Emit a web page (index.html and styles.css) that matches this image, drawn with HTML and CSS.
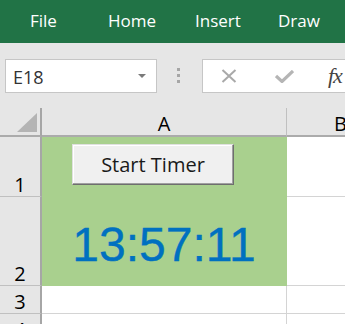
FILE: index.html
```html
<!DOCTYPE html>
<html lang="en">
<head>
<meta charset="utf-8">
<title>Timer</title>
<link rel="stylesheet" href="styles.css">
</head>
<body>
<div class="app">
  <nav class="ribbon">
    <span class="tab tab-file">File</span>
    <span class="tab tab-home">Home</span>
    <span class="tab tab-insert">Insert</span>
    <span class="tab tab-draw">Draw</span>
  </nav>
  <div class="formula-bar">
    <div class="name-box">
      <span class="name">E18</span>
      <svg class="caret" width="8" height="4" viewBox="0 0 8 4"><polygon points="0,0 8,0 4,4" fill="#7a7a7a"/></svg>
    </div>
    <div class="grip"><i></i><i></i><i></i></div>
    <div class="formula-box">
      <svg class="icon-x" width="16" height="14" viewBox="0 0 16 14"><path d="M1.5 1 L14.5 13 M14.5 1 L1.5 13" stroke="#a9a9a9" stroke-width="2" fill="none"/></svg>
      <svg class="icon-check" width="19" height="13" viewBox="0 0 19 13"><path d="M1 6 L7 11.5 L18 1" stroke="#b5b5b5" stroke-width="3.2" fill="none"/></svg>
      <span class="fx">fx</span>
    </div>
  </div>
  <div class="sheet">
    <div class="corner"><svg width="20" height="19" viewBox="0 0 20 19"><polygon points="20,0 20,19 0,19" fill="#b4b4b4"/></svg></div>
    <div class="col-head col-a">A</div>
    <div class="col-head col-b">B</div>

    <div class="row-head">1</div>
    <div class="cell fill a1"><button class="btn" type="button">Start Timer</button></div>
    <div class="cell plain"></div>

    <div class="row-head">2</div>
    <div class="cell fill a2"><span class="time">13:57:11</span></div>
    <div class="cell plain"></div>

    <div class="row-head">3</div>
    <div class="cell plain col-a-cell"></div>
    <div class="cell plain"></div>

    <div class="row-head">4</div>
    <div class="cell plain col-a-cell"></div>
    <div class="cell plain"></div>
  </div>
</div>
</body>
</html>
```

FILE: styles.css
```css
* { box-sizing: border-box; }

html, body {
  margin: 0;
  padding: 0;
  background: #ffffff;
}

.app {
  width: 345px;
  height: 324px;
  overflow: hidden;
  font-family: "Open Sans", "Noto Sans", sans-serif;
}

/* Ribbon */
.ribbon {
  display: flex;
  height: 43px;
  background: #217346;
  padding-left: 30px;
  padding-top: 9px;
  color: #ffffff;
  font-size: 17px;
  line-height: 23px;
}
.tab { flex: none; white-space: nowrap; }
.tab-file { width: 78px; }
.tab-home { width: 87px; }
.tab-insert { width: 83px; }
.tab-draw { width: 60px; }

/* Formula bar */
.formula-bar {
  display: flex;
  align-items: flex-start;
  height: 65px;
  background: #e6e6e6;
  padding-top: 16px;
  padding-left: 5px;
  overflow: hidden;
}
.name-box {
  flex: none;
  display: flex;
  align-items: center;
  justify-content: space-between;
  width: 152px;
  height: 34px;
  background: #ffffff;
  border: 1px solid #c6c6c6;
  padding: 0 10px 0 7px;
}
.name {
  font-size: 18px;
  line-height: 32px;
  color: #333333;
  padding-top: 1px;
}
.caret { display: block; }

.grip {
  flex: none;
  display: flex;
  flex-direction: column;
  gap: 3px;
  margin-left: 20px;
  margin-top: 9px;
}
.grip i {
  display: block;
  width: 3px;
  height: 3px;
  background: #a6a6a6;
}

.formula-box {
  flex: none;
  display: flex;
  align-items: center;
  width: 200px;
  height: 34px;
  margin-left: 22px;
  background: #ffffff;
  border: 1px solid #c6c6c6;
  padding-left: 18px;
}
.icon-x { display: block; flex: none; }
.icon-check { display: block; flex: none; margin-left: 38px; margin-top: 1px; }
.fx {
  flex: none;
  margin-left: 34px;
  font-family: "Liberation Serif", serif;
  font-style: italic;
  font-size: 22px;
  color: #444444;
  letter-spacing: -1px;
}

/* Sheet */
.sheet {
  display: grid;
  grid-template-columns: 42px 245px 1fr;
  grid-template-rows: 29px 60px 89px 28px 28px;
}
.corner {
  background: #e6e6e6;
  border-right: 2px solid #a6a6a6;
  border-bottom: 2px solid #ababab;
  display: flex;
  align-items: flex-end;
  justify-content: flex-end;
  padding: 0 3px 3px 0;
}
.corner svg { display: block; }
.col-head {
  background: #e6e6e6;
  border-bottom: 2px solid #ababab;
  display: flex;
  align-items: flex-end;
  justify-content: center;
  font-size: 20px;
  line-height: 20px;
  color: #000000;
  padding-bottom: 1px;
}
.col-a { border-right: 1px solid #c0c0c0; }
.col-b { justify-content: flex-start; padding-left: 47px; }

.row-head {
  background: #e6e6e6;
  border-right: 2px solid #a6a6a6;
  border-bottom: 1px solid #c0c0c0;
  display: flex;
  align-items: flex-end;
  justify-content: center;
  font-size: 20px;
  line-height: 20px;
  color: #000000;
  padding-bottom: 1px;
}

.cell { border-bottom: 1px solid #d4d4d4; }
.plain { background: #ffffff; }
.col-a-cell { border-right: 1px solid #d4d4d4; }
.fill {
  background: #a9d08e;
  border-bottom-color: #a9d08e;
  border-right: 1px solid #a9d08e;
}

.a1 {
  padding: 7px 0 0 30px;
}
.btn {
  display: block;
  width: 162px;
  height: 41px;
  margin: 0;
  padding: 0;
  background: #f0f0f0;
  border: 1px solid;
  border-color: #e0e0e0 #6e6e6e #6e6e6e #e0e0e0;
  box-shadow: inset -1px -1px 0 #a0a0a0, inset 1px 1px 0 #ffffff;
  font-family: "Open Sans", "Noto Sans", sans-serif;
  font-size: 20px;
  line-height: 27px;
  color: #1a1a1a;
}

.a2 {
  display: flex;
  justify-content: center;
  align-items: flex-start;
  padding-top: 24px;
}
.time {
  font-family: "Liberation Sans", Arial, sans-serif;
  font-size: 48px;
  line-height: 48px;
  color: #0070c0;
  -webkit-text-stroke: 0.4px #0070c0;
}
```
